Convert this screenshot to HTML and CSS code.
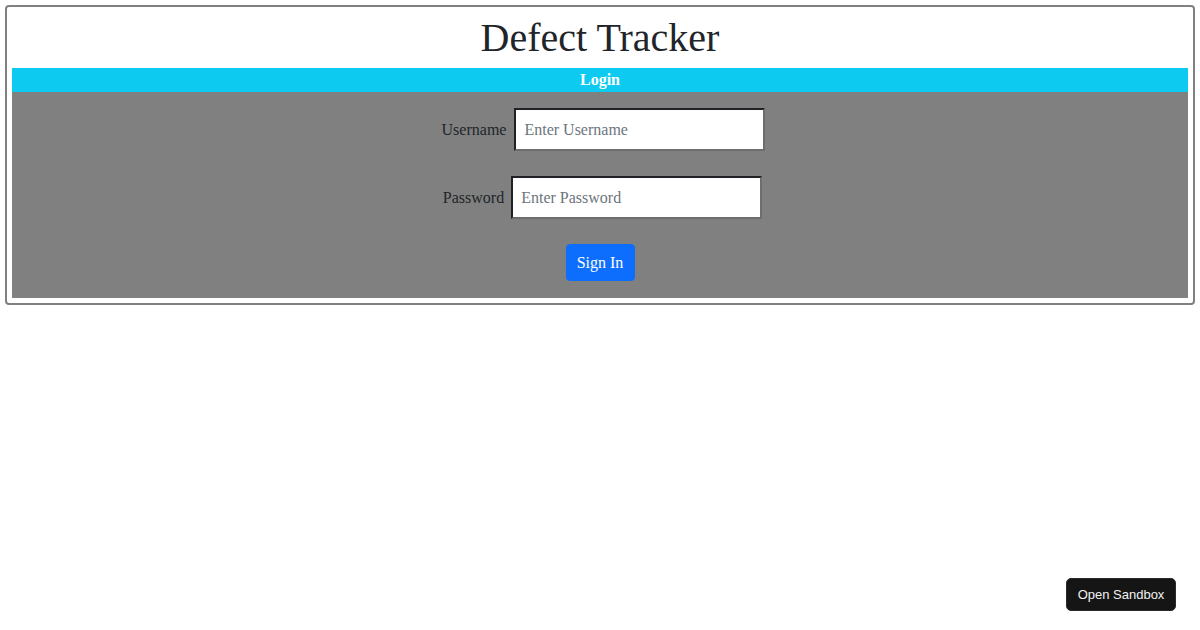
FILE: index.html
```html
<!DOCTYPE html>
<html>
<head>
<meta charset="utf-8">
<link rel="stylesheet" href="styles.css">
</head>
<body>
<div class="frame">
  <h1 class="title">Defect Tracker</h1>
  <div class="bar">Login</div>
  <form class="panel">
    <div class="row">
      <label class="label" for="u">Username</label>
      <input class="field" id="u" type="text" placeholder="Enter Username">
    </div>
    <div class="row row-pw">
      <label class="label" for="p">Password</label>
      <input class="field" id="p" type="password" placeholder="Enter Password">
    </div>
    <div class="row row-btn">
      <button type="button" class="btn">Sign In</button>
    </div>
  </form>
</div>
<button class="sandbox" type="button">Open Sandbox</button>
</body>
</html>
```
FILE: styles.css
```css
html, body {
  margin: 0;
  padding: 0;
  background: #fff;
}
body {
  font-family: "Liberation Serif", "Times New Roman", serif;
  color: #212529;
  font-size: 16px;
}
.frame {
  margin: 5px;
  border: 2px solid #808080;
  border-radius: 4px;
  padding: 5px;
}
.title {
  margin: 2px 0 6px 0;
  font-weight: 400;
  font-size: 40px;
  line-height: 48px;
  text-align: center;
  color: #212529;
}
.bar {
  background: #0dcaf0;
  color: #fff;
  font-weight: 700;
  text-align: center;
  line-height: 24px;
  height: 24px;
}
.panel {
  margin: 0;
  background: #808080;
  padding: 16px 0 17px 0;
  display: flex;
  flex-direction: column;
  gap: 25px;
}
.row {
  display: flex;
  align-items: center;
  justify-content: center;
  gap: 8px;
  padding-left: 7px;
}
.row-pw {
  gap: 7px;
  padding-left: 5px;
}
.label {
  color: #212529;
  font-size: 16px;
}
.field {
  box-sizing: border-box;
  width: 251px;
  height: 43px;
  padding: 0 8px;
  font-family: "Liberation Serif", "Times New Roman", serif;
  font-size: 16px;
  background: #fff;
  border-style: solid;
  border-width: 2px;
  border-color: #202124 #6e6e6e #6e6e6e #202124;
  outline: none;
}
.field::placeholder {
  color: #6c757d;
}
.row-btn {
  padding-left: 0;
}
.btn {
  box-sizing: border-box;
  width: 69px;
  height: 37px;
  padding: 0;
  background: #0d6efd;
  border: 1px solid #0d6efd;
  border-radius: 4px;
  color: #fff;
  font-family: "Liberation Serif", "Times New Roman", serif;
  font-size: 16px;
  line-height: 24px;
}
.sandbox {
  position: fixed;
  right: 24px;
  bottom: 19px;
  width: 110px;
  height: 33px;
  background: #151515;
  color: #f2f2f2;
  border: 1px solid #2a2a2a;
  border-radius: 5px;
  font-family: "Liberation Sans", Arial, sans-serif;
  font-size: 13px;
  padding: 0;
}
```
